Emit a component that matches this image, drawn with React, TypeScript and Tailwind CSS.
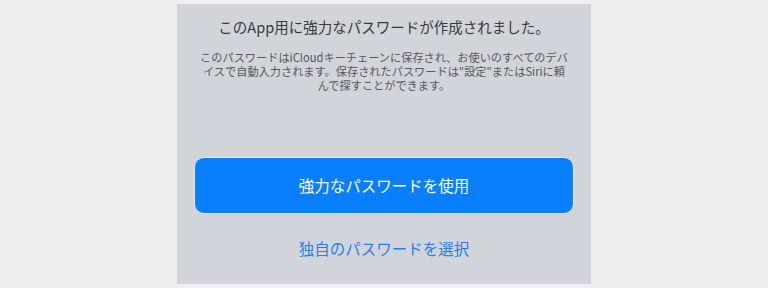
export default function App() {
  const font = { fontFamily: '"Noto Sans CJK JP", "Noto Sans", sans-serif' };
  return (
    <div className="w-full h-[288px] bg-[#efefef] flex justify-center pt-[4px]" style={font}>
      <div className="w-[414px] h-[280px] bg-[#d1d4db] flex flex-col items-center">
        <div className="mt-[13px] h-[20px] leading-[20px] text-[14.5px] text-[#3a3a3d] text-center whitespace-nowrap">
          このApp用に強力なパスワードが作成されました。
        </div>
        <div className="mt-[13px] flex flex-col items-center text-[11.2px] text-[#58585c] whitespace-nowrap">
          <p className="h-[14px] leading-[14px]">このパスワードはiCloudキーチェーンに保存され、お使いのすべてのデバ</p>
          <p className="h-[14px] leading-[14px]">イスで自動入力されます。保存されたパスワードは"設定"またはSiriに頼</p>
          <p className="h-[14px] leading-[14px]">んで探すことができます。</p>
        </div>
        <button className="mt-[65px] w-[380px] h-[57px] rounded-[10px] bg-[#0a7ffe] border border-[#f1ead6] text-white text-[15.5px] flex items-center justify-center">
          強力なパスワードを使用
        </button>
        <div className="mt-[22px] h-[24px] leading-[24px] text-[15.5px] text-[#2d7ee6]">
          独自のパスワードを選択
        </div>
      </div>
    </div>
  );
}
